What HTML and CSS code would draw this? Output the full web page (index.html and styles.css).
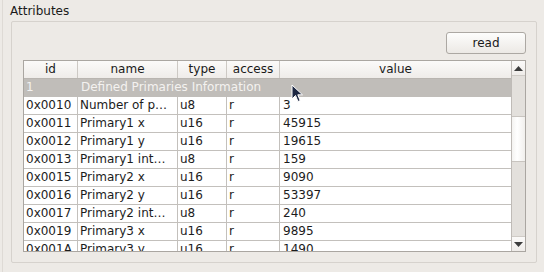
FILE: index.html
```html
<!DOCTYPE html>
<html>
<head>
<meta charset="utf-8">
<link rel="stylesheet" href="styles.css">
</head>
<body>
<div class="window">
  <div class="title">Attributes</div>
  <div class="group">
    <div class="toolbar"><button class="btn">read</button></div>
    <div class="table">
      <div class="main">
        <div class="hrow">
          <div class="hcell c-id">id</div>
          <div class="hcell c-name">name</div>
          <div class="hcell c-type">type</div>
          <div class="hcell c-acc">access</div>
          <div class="hcell c-val">value</div>
        </div>
        <div class="body">
          <div class="row sel"><div class="cell c-id">1</div><div class="cell span">Defined Primaries Information</div></div>
          <div class="row"><div class="cell c-id">0x0010</div><div class="cell c-name">Number of p…</div><div class="cell c-type">u8</div><div class="cell c-acc">r</div><div class="cell c-val">3</div></div>
          <div class="row"><div class="cell c-id">0x0011</div><div class="cell c-name">Primary1 x</div><div class="cell c-type">u16</div><div class="cell c-acc">r</div><div class="cell c-val">45915</div></div>
          <div class="row"><div class="cell c-id">0x0012</div><div class="cell c-name">Primary1 y</div><div class="cell c-type">u16</div><div class="cell c-acc">r</div><div class="cell c-val">19615</div></div>
          <div class="row"><div class="cell c-id">0x0013</div><div class="cell c-name">Primary1 int…</div><div class="cell c-type">u8</div><div class="cell c-acc">r</div><div class="cell c-val">159</div></div>
          <div class="row"><div class="cell c-id">0x0015</div><div class="cell c-name">Primary2 x</div><div class="cell c-type">u16</div><div class="cell c-acc">r</div><div class="cell c-val">9090</div></div>
          <div class="row"><div class="cell c-id">0x0016</div><div class="cell c-name">Primary2 y</div><div class="cell c-type">u16</div><div class="cell c-acc">r</div><div class="cell c-val">53397</div></div>
          <div class="row"><div class="cell c-id">0x0017</div><div class="cell c-name">Primary2 int…</div><div class="cell c-type">u8</div><div class="cell c-acc">r</div><div class="cell c-val">240</div></div>
          <div class="row"><div class="cell c-id">0x0019</div><div class="cell c-name">Primary3 x</div><div class="cell c-type">u16</div><div class="cell c-acc">r</div><div class="cell c-val">9895</div></div>
          <div class="row"><div class="cell c-id">0x001A</div><div class="cell c-name">Primary3 y</div><div class="cell c-type">u16</div><div class="cell c-acc">r</div><div class="cell c-val">1490</div></div>
        </div>
      </div>
      <div class="scrollbar">
        <div class="sb-btn"><svg width="9" height="5" viewBox="0 0 9 5"><path d="M0 5 L4.5 0 L9 5 Z" fill="#3c3c3c"/></svg></div>
        <div class="sb-track">
          <div class="sb-space-top"></div>
          <div class="sb-handle"></div>
        </div>
        <div class="sb-btn down"><svg width="9" height="5" viewBox="0 0 9 5"><path d="M0 0 L9 0 L4.5 5 Z" fill="#3c3c3c"/></svg></div>
      </div>
      <svg class="cursor" width="13" height="19" viewBox="0 0 13 19"><path d="M1 1 L1 15 L4.5 11.5 L7 17.5 L9.2 16.6 L6.8 10.8 L11.5 10.8 Z" fill="#1d2742" stroke="#ffffff" stroke-width="1"/></svg>
    </div>
  </div>
</div>
</body>
</html>
```

FILE: styles.css
```css
html, body {
  margin: 0;
  padding: 0;
}
body {
  width: 544px;
  height: 272px;
  overflow: hidden;
  background: #edeae6;
  font-family: "DejaVu Sans", sans-serif;
  font-size: 12px;
  color: #1c1c1c;
}
.window {
  margin-left: 2px;
  border-left: 1px solid #dedad5;
  height: 272px;
  box-sizing: border-box;
}
.title {
  padding: 4px 0 0 7px;
  line-height: 14px;
  height: 17px;
  color: #1a1a1a;
}
.group {
  margin-left: 8px;
  width: 526px;
  height: 242px;
  box-sizing: border-box;
  border: 1px solid #d6d2cd;
  border-radius: 2px;
  padding: 10px 10px 10px 11px;
  display: flex;
  flex-direction: column;
}
.toolbar {
  display: flex;
  justify-content: flex-end;
  height: 22px;
}
.btn {
  width: 80px;
  height: 22px;
  border: 1px solid #aca8a3;
  border-radius: 3px;
  background: linear-gradient(#fdfdfc, #ece9e5);
  font-family: "DejaVu Sans", sans-serif;
  font-size: 12px;
  color: #1a1a1a;
  padding: 0;
  margin: 0;
}
.table {
  margin-top: 6px;
  width: 503px;
  height: 192px;
  box-sizing: border-box;
  border: 1px solid #aaa6a1;
  display: flex;
  position: relative;
  background: #ffffff;
}
.main {
  width: 487px;
  display: flex;
  flex-direction: column;
  overflow: hidden;
}
.hrow {
  display: flex;
  height: 18px;
  box-sizing: border-box;
  border-bottom: 1px solid #b9b5b0;
  background: linear-gradient(#fbfaf9, #efece9);
  flex: none;
}
.hcell {
  box-sizing: border-box;
  text-align: center;
  line-height: 17px;
  border-right: 1px solid #cdc9c4;
  color: #1a1a1a;
}
.c-id { width: 54px; }
.c-name { width: 100px; }
.c-type { width: 49px; }
.c-acc { width: 53px; }
.c-val { width: 231px; }
.hcell.c-val { border-right: none; }
.body {
  flex: 1;
  overflow: hidden;
}
.row {
  display: flex;
  height: 18px;
  box-sizing: border-box;
  border-bottom: 1px solid #c3c0bc;
}
.cell {
  box-sizing: border-box;
  line-height: 17px;
  padding-left: 2px;
  border-right: 1px solid #c3c0bc;
  white-space: nowrap;
  overflow: hidden;
}
.cell.c-val { border-right: none; padding-left: 3px; }
.row.sel {
  background: #c0bdb9;
  color: #f4f2f0;
  border-bottom-color: #c0bdb9;
}
.row.sel .cell { border-right: none; }
.span { flex: 1; padding-left: 3px; }
.scrollbar {
  width: 14px;
  box-sizing: border-box;
  border-left: 1px solid #bfbbb7;
  background: #e3e0dc;
  display: flex;
  flex-direction: column;
}
.sb-btn {
  height: 14px;
  flex: none;
  background: linear-gradient(#fbfaf9, #efece9);
  border-bottom: 1px solid #cfcbc6;
  display: flex;
  align-items: center;
  justify-content: center;
}
.sb-btn.down {
  border-bottom: none;
  border-top: 1px solid #cfcbc6;
}
.sb-track {
  flex: 1;
  display: flex;
  flex-direction: column;
}
.sb-space-top {
  height: 40px;
  flex: none;
  border-bottom: 1px solid #c8c4bf;
}
.sb-handle {
  height: 45px;
  box-sizing: border-box;
  background: linear-gradient(90deg, #f4f3f1, #ffffff 40%, #f1efec);
  border-bottom: 1px solid #c8c4bf;
}
.cursor {
  position: absolute;
  left: 267px;
  top: 23px;
}
```
